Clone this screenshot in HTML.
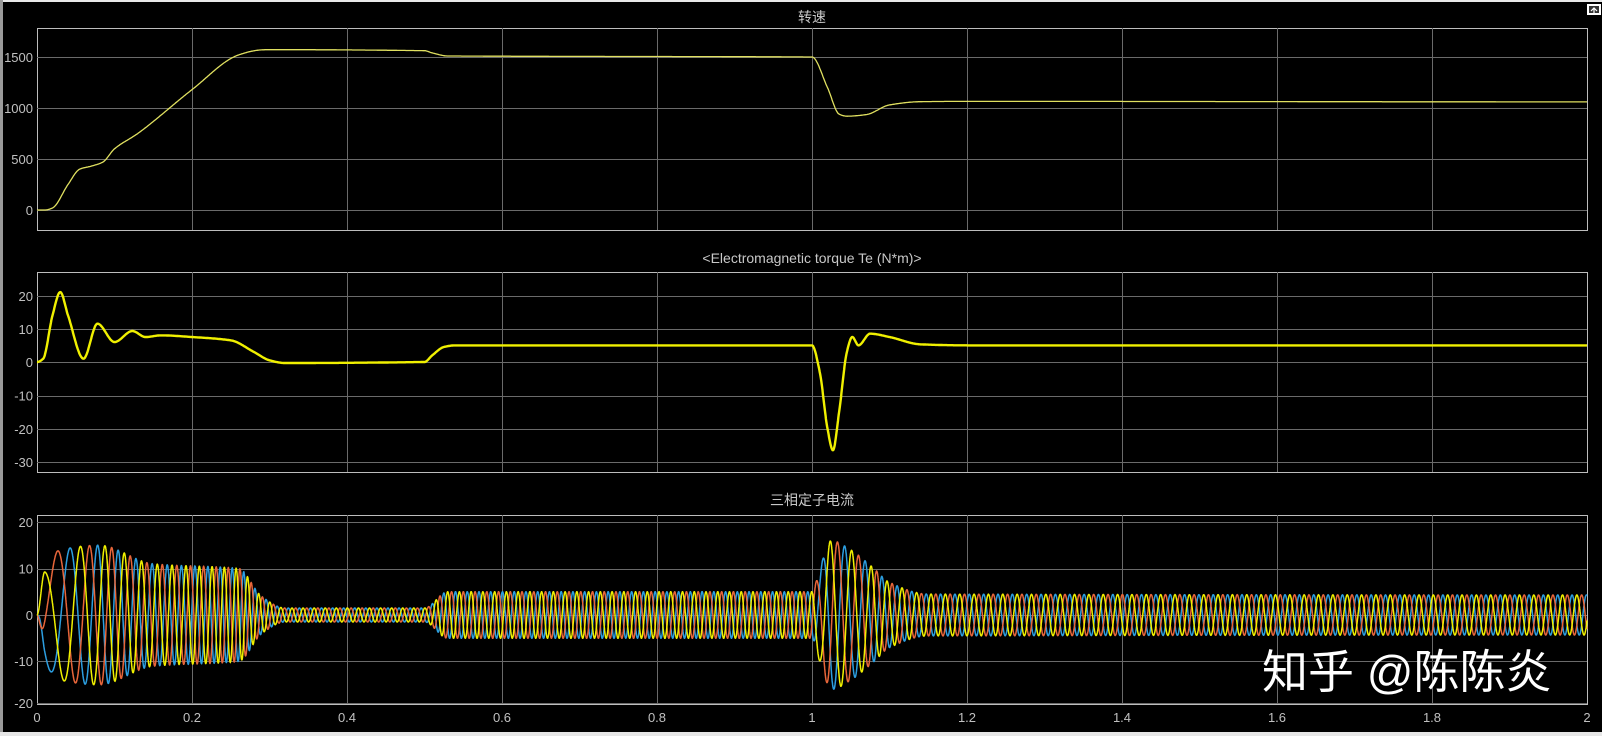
<!DOCTYPE html>
<html><head><meta charset="utf-8"><style>
html,body{margin:0;padding:0;background:#000;width:1602px;height:736px;overflow:hidden}
svg{display:block}
text{font-family:"Liberation Sans","Noto Sans CJK SC",sans-serif}
</style></head><body>
<svg id="s" width="1602" height="736" xmlns="http://www.w3.org/2000/svg">
<rect x="0" y="0" width="1602" height="736" fill="#000"/>
<rect x="0" y="0" width="1602" height="2" fill="#e8e8e8"/>
<rect x="0" y="0" width="3" height="736" fill="#9a9a9a"/>
<rect x="0" y="732" width="1602" height="4" fill="#e6e6e6"/>
<rect x="1587" y="4" width="14" height="11" fill="#fff"/>
<rect x="1589" y="6" width="10" height="7" fill="#333"/>
<path d="M1591 11 L1594 8 L1597 11 M1594 8 V13" stroke="#fff" stroke-width="1.2" fill="none"/>
<g id="grid"></g>
<text x="812" y="22" fill="#c8c8c8" font-size="14" text-anchor="middle">转速</text>
<text x="812" y="263" fill="#c8c8c8" font-size="14" text-anchor="middle">&lt;Electromagnetic torque Te (N*m)&gt;</text>
<text x="812" y="505" fill="#c8c8c8" font-size="14" text-anchor="middle">三相定子电流</text>
<g id="curves"></g>
<text x="1262" y="688" fill="#fff" font-size="46" font-family="'Noto Sans CJK SC',sans-serif">知乎 @陈陈炎</text>
</svg>
<script>
var NS="http://www.w3.org/2000/svg";
function el(tag,attrs,parent,txt){var e=document.createElementNS(NS,tag);for(var k in attrs)e.setAttribute(k,attrs[k]);if(txt!==undefined)e.textContent=txt;parent.appendChild(e);return e;}
var G=document.getElementById('grid'),C=document.getElementById('curves');
var L=37,R=1587;
function X(t){return L+t*775;}
var plots=[
 {top:28,bot:230,ticks:[[0,210],[500,159],[1000,108],[1500,57]]},
 {top:272,bot:472,ticks:[[20,296],[10,329],[0,362],[-10,395.5],[-20,429],[-30,462]]},
 {top:515,bot:704,ticks:[[20,522],[10,568.5],[0,615],[-10,661],[-20,703]]}
];
plots.forEach(function(p,i){
 el('rect',{x:L+0.5,y:p.top+0.5,width:R-L,height:p.bot-p.top,fill:'none',stroke:'#bdbdbd','stroke-width':1},G);
 for(var k=1;k<10;k++){var x=Math.round(X(k*0.2))+0.5;el('line',{x1:x,x2:x,y1:p.top,y2:p.bot,stroke:'#6a6a6a','stroke-width':1},G);}
 p.ticks.forEach(function(tk){var y=Math.round(tk[1])+0.5;el('line',{x1:L,x2:R,y1:y,y2:y,stroke:'#6a6a6a','stroke-width':1},G);
  el('text',{x:33,y:tk[1]+5,fill:'#c0c0c0','font-size':13,'text-anchor':'end'},G,String(tk[0]));});
});
for(var k=0;k<=10;k++){var v=(k*0.2);var s=k==0?'0':k==5?'1':k==10?'2':v.toFixed(1);
 el('text',{x:X(v),y:722,fill:'#c0c0c0','font-size':13,'text-anchor':'middle'},G,s);}
// monotone cubic (Fritsch-Carlson)
function prep(pts){var n=pts.length,d=[],m=[];for(var i=0;i<n-1;i++)d.push((pts[i+1][1]-pts[i][1])/(pts[i+1][0]-pts[i][0]));
 m[0]=0;m[n-1]=0;for(var i=1;i<n-1;i++){if(d[i-1]*d[i]<=0)m[i]=0;else m[i]=2/(1/d[i-1]+1/d[i]);}pts.m=m;return pts;}
function interp(pts,t){var n=pts.length;if(t<=pts[0][0])return pts[0][1];if(t>=pts[n-1][0])return pts[n-1][1];
 for(var i=1;i<n;i++){if(t<=pts[i][0]){var a=pts[i-1],b=pts[i];var h=b[0]-a[0];var u=(t-a[0])/h;
  var m0=pts.m[i-1],m1=pts.m[i];var u2=u*u,u3=u2*u;
  return (2*u3-3*u2+1)*a[1]+(u3-2*u2+u)*h*m0+(-2*u3+3*u2)*b[1]+(u3-u2)*h*m1;}}}
var sp=prep([[0,0],[0.01,0],[0.02,20],[0.04,250],[0.055,400],[0.07,430],[0.085,470],[0.1,600],[0.13,750],[0.2,1180],[0.26,1520],[0.29,1570],[0.3,1572],[0.5,1562],[0.51,1540],[0.53,1510],[1.0,1500],[1.02,1200],[1.035,940],[1.045,920],[1.07,935],[1.1,1030],[1.14,1062],[1.2,1065],[2,1060]]);
var d='';for(var t=0;t<=2;t+=0.001){d+=(t==0?'M':'L')+X(t).toFixed(1)+' '+(210-interp(sp,t)*0.102).toFixed(1);}
el('path',{d:d,stroke:'#e0e060',fill:'none','stroke-width':1.3},C);
var tq=prep([[0,0],[0.008,1],[0.02,14],[0.03,21],[0.04,14],[0.06,1],[0.078,11.5],[0.1,6],[0.123,9.3],[0.14,7.5],[0.16,8],[0.2,7.5],[0.25,6.5],[0.28,3],[0.3,0.5],[0.32,-0.3],[0.5,0],[0.51,2],[0.525,4.5],[0.54,5],[1.0,5],[1.01,-3],[1.02,-20],[1.027,-26.5],[1.035,-15],[1.045,3],[1.052,7.5],[1.06,5],[1.075,8.5],[1.1,7.5],[1.14,5.3],[1.2,5],[2,5]]);
d='';for(var t=0;t<=2;t+=0.0005){d+=(t==0?'M':'L')+X(t).toFixed(1)+' '+(362-interp(tq,t)*3.33).toFixed(1);}
el('path',{d:d,stroke:'#f0f000',fill:'none','stroke-width':2.4},C);
var amp=prep([[0,0],[0.01,10],[0.03,14],[0.08,15],[0.15,11],[0.26,10],[0.29,4],[0.32,1.5],[0.5,1.5],[0.53,5],[1.0,5],[1.01,10],[1.025,16],[1.05,14],[1.08,10],[1.1,7],[1.15,4.5],[2,4.3]]);
var fq=prep([[0,14],[0.05,25],[0.1,40],[0.2,58],[0.3,70],[0.5,70],[0.53,66],[1.0,66],[1.01,35],[1.06,38],[1.09,50],[1.15,54],[2,54]]);
var cols=['#2c9ee0','#e8663a','#f0f000'];
var paths=['','',''];var th=0;
for(var t=0;t<=2;t+=0.0002){var f=interp(fq,t);th+=2*Math.PI*f*0.0002;var A=interp(amp,t);
 for(var j=0;j<3;j++){var y=615-A*4.65*Math.sin(th+j*2*Math.PI/3+Math.PI);paths[j]+=(t==0?'M':'L')+X(t).toFixed(1)+' '+y.toFixed(1);}}
for(var j=0;j<3;j++)el('path',{d:paths[j],stroke:cols[j],fill:'none','stroke-width':1.5},C);
</script>
</body></html>
